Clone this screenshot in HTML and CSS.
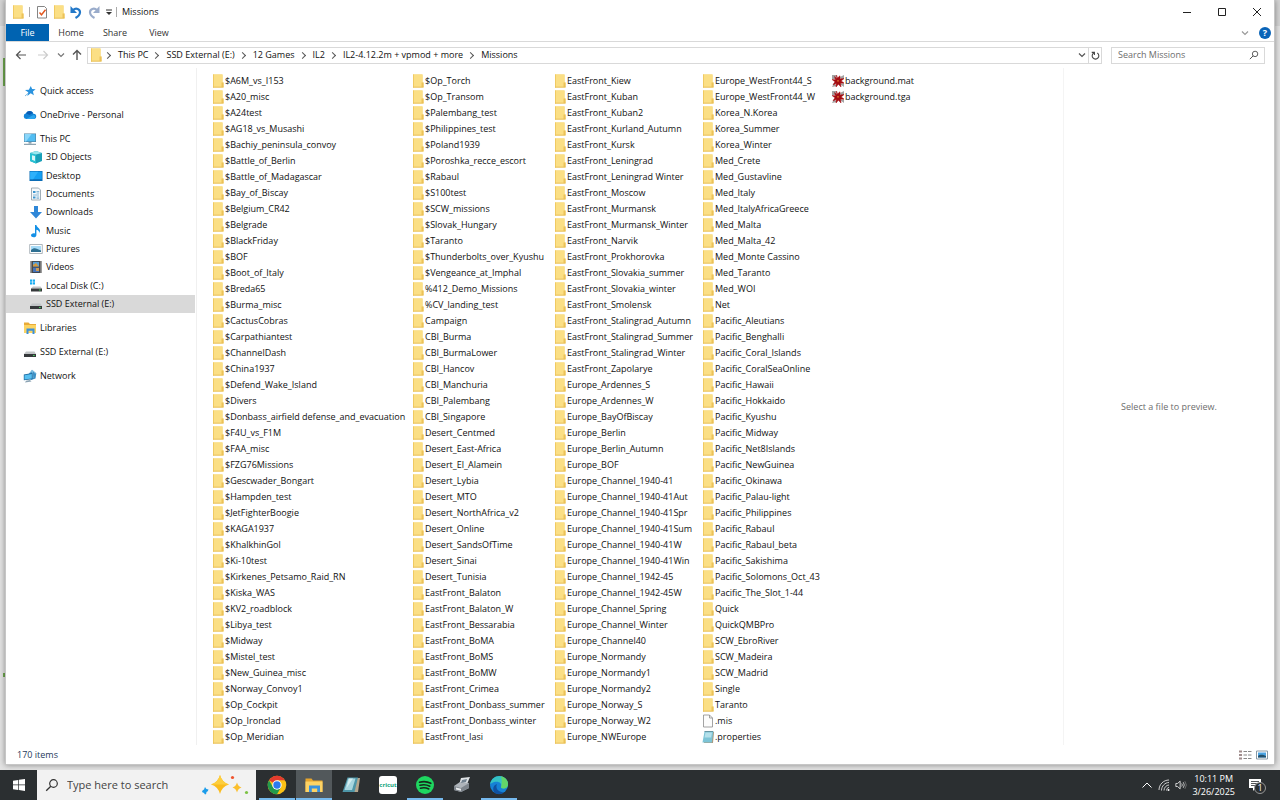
FILE: index.html
```html
<!DOCTYPE html>
<html lang="en">
<head>
    <meta charset="UTF-8">
    <meta name="viewport" content="width=device-width, initial-scale=1.0">
    <title>Missions</title>
    <link rel="stylesheet" href="styles.css">
</head>
<body>
    <!-- Icon sprite -->
    <svg class="sprite" aria-hidden="true">
        <symbol id="i-folder" viewBox="0 0 12 14">
            <path d="M1 .5h9.500v8H11.500v5H1z" fill="#f3cf66"/>
            <path d="M1 .5h9.500v12.500H1z" fill="#fbdf85"/>
            <path d="M1 .5h1v13H1z" fill="#f0ca62"/>
            <path d="M9.500 8.500h2v4.500h-2z" fill="#ecc258"/>
            <path d="M1 12.700h10.500v.8H1z" fill="#e6bd55"/>
        </symbol>
        <symbol id="i-file" viewBox="0 0 12 14">
            <path d="M1.500 1h6l3 3v9h-9z" fill="#fcfcfc" stroke="#8c8c8c" stroke-width=".8"/>
            <path d="M7.500 1v3h3" fill="none" stroke="#8c8c8c" stroke-width=".8"/>
        </symbol>
        <symbol id="i-props" viewBox="0 0 12 14">
            <path d="M3 2h9l-1 11H2z" fill="#a99a80"/>
            <path d="M2.500 1.500h8.800L9.800 12.500H.5z" fill="#7cc4d6"/>
            <path d="M3.500 2.500h6.500l-.8 5H2.500z" fill="#b4e0ea"/>
            <path d="M2.500 1.500h8.800" stroke="#5c8b99" stroke-width=".9"/>
        </symbol>
        <symbol id="i-splat" viewBox="0 0 12 12">
            <path d="M0 0h4v4H0zM8 2l4-2v4L9 5zM0 12l2-4 3 3zM8 9l4-1v4z" fill="#a3a3a3"/>
            <path d="M4.500 0l1 3L8 .8 8 4l4-.5L9.200 6l2.800 2-3.400.2L9 12 6.400 9.200 4 12l.2-3.500L1 9.800l2-3L0 4.500l3.500.3L2.500 1.500l2.200 2z" fill="#a40d12" stroke="#a40d12" stroke-width=".5"/>
            <circle cx="6" cy="5.800" r=".9" fill="#e0742e"/>
        </symbol>
        <symbol id="i-star" viewBox="0 0 14 14">
            <path d="M7.800 2l1.300 3.100 3.500.1-2.700 2.300 1 3.700-3.200-1.900L4.300 12l.9-3.700L2 6l3.900-.3z" fill="#2a93df"/>
            <path d="M2 12l3.500-3" stroke="#7ab8e0" stroke-width="1"/>
        </symbol>
        <symbol id="i-cloud" viewBox="0 0 14 14">
            <path d="M3.200 11A2.900 2.900 0 0 1 3 5.300 4 4 0 0 1 10.400 5.700a2.700 2.700 0 0 1 .9 5.300z" fill="#1283d6"/>
            <path d="M3 5.300A4 4 0 0 1 10 4.800L6.500 7z" fill="#0a5cb4"/>
            <path d="M3.200 11l7.500-4.300a2.700 2.700 0 0 1 .9 4.300z" fill="#2ba5ee"/>
        </symbol>
        <symbol id="i-pc" viewBox="0 0 14 14">
            <path d="M1 1.500h12v8.500H1z" fill="#4b7f9f"/>
            <path d="M1.600 2.100h10.800v7.300H1.600z" fill="#52bdf2"/>
            <path d="M1.600 2.100h7L3 9.400H1.600z" fill="#8bd6f9"/>
            <path d="M5.500 10h3v1.500h-3zM1 11.700h12v1.300H1z" fill="#8fa4b1"/>
        </symbol>
        <symbol id="i-cube" viewBox="0 0 14 14">
            <path d="M7 1l6 2v8l-6 2.500L1 11V3z" fill="#1aa0b8"/>
            <path d="M1 3l6 1.500v9L1 11z" fill="#27c1d3"/>
            <path d="M7 1l6 2-6 1.600L1 3z" fill="#9ae8ee"/>
            <path d="M3 5.200l3 .9V11l-3-1.200z" fill="#d9f7f8"/>
        </symbol>
        <symbol id="i-desktop" viewBox="0 0 14 14">
            <path d="M.5 2h13v10H.5z" fill="#0b6cb5"/>
            <path d="M1.200 2.700h11.600v7.500H1.200z" fill="#14a0f4"/>
            <path d="M1.200 2.700h8l-5 7.500h-3z" fill="#2eb1fb"/>
        </symbol>
        <symbol id="i-doc" viewBox="0 0 14 14">
            <path d="M2.500 1h7l2 2v10h-9z" fill="#f6f9fb" stroke="#8c9aa4" stroke-width=".8"/>
            <path d="M4 4h2.500v2H4zM4 9.500h2.500v2H4z" fill="#3b95cf"/>
            <path d="M7.500 4.500h2.700M7.500 6h2.700M4 8h6M7.500 10h2.700M7.500 11.300h2.700" stroke="#6aa6cc" stroke-width=".8"/>
        </symbol>
        <symbol id="i-down" viewBox="0 0 14 14">
            <path d="M5 1h4v6h4l-6 6.500L1 7h4z" fill="#2f87d8"/>
        </symbol>
        <symbol id="i-music" viewBox="0 0 14 14">
            <path d="M6 1h1.400c.2 2.300 3.400 3 3.600 5.500 0 1-.3 1.800-.8 2.500.2-2-1.300-3-2.800-3.300V11c0 1.400-1.200 2.300-2.700 2.300S2 12.600 2 11.300s1.700-2.500 4-1.900z" fill="#1490e6"/>
        </symbol>
        <symbol id="i-pic" viewBox="0 0 14 14">
            <path d="M.7 2.500h12.600v9H.7z" fill="#fff" stroke="#9aa5ac" stroke-width=".8"/>
            <path d="M2 4h10v6H2z" fill="#a8dcf8"/>
            <path d="M2 8c3-3 5-2 10 .5V10H2z" fill="#2e7092"/>
        </symbol>
        <symbol id="i-video" viewBox="0 0 14 14">
            <path d="M1.500 1h11v12h-11z" fill="#3b3b3b"/>
            <path d="M4 1.800h6v4.700H4z" fill="#5aa0d8"/>
            <path d="M4 7.500h6v4.700H4z" fill="#4674ba"/>
            <path d="M4 5l3-2 3 3.500H4z" fill="#d59a3d"/>
            <path d="M7 8h3v3H7z" fill="#cc9a58"/>
            <path d="M2.700 1.500v11M11.300 1.500v11" stroke="#d8d8d8" stroke-width="1" stroke-dasharray="1 1"/>
        </symbol>
        <symbol id="i-drive" viewBox="0 0 14 14">
            <path d="M3 6.500h8.500L13 9H1z" fill="#c2c5c7"/>
            <path d="M1 9h12v3H1z" fill="#36393b"/>
            <path d="M10 10h1.700v1H10z" fill="#46d15c"/>
        </symbol>
        <symbol id="i-osdrive" viewBox="0 0 14 14">
            <path d="M1 .5h2.200v2.200H1zM3.800.5H6v2.200H3.800zM1 3.300h2.200v2.200H1zM3.800 3.300H6v2.200H3.800z" fill="#16abf0"/>
            <path d="M4 7.500h7.500L13 9.500H2z" fill="#c2c5c7"/>
            <path d="M2 9.500h11v3H2z" fill="#36393b"/>
            <path d="M10 10.500h1.700v1H10z" fill="#46d15c"/>
        </symbol>
        <symbol id="i-lib" viewBox="0 0 14 14">
            <path d="M1 1.500h4.500L7 3h6v9H1z" fill="#e9ab38"/>
            <path d="M1 4h12v8H1z" fill="#fcd462"/>
            <path d="M3.500 7.500h8V13h-2V9.700h-4V13h-2z" fill="#3c90d8"/>
        </symbol>
        <symbol id="i-net" viewBox="0 0 14 14">
            <path d="M9 .8l4.300 3.500-.8 5.200L8 11 5 6z" fill="#3c8fc4"/>
            <path d="M7 3.500l3-1.700 2.500 3M9 1l1 8" stroke="#a5d8f2" stroke-width=".6" fill="none"/>
            <path d="M.8 5.500L9.500 4v6.200L.8 11.200z" fill="#1d6a9f"/>
            <path d="M1.500 6.200L8.800 5v4.500l-7.300.9z" fill="#57bff0"/>
            <path d="M3 11.700l4-.6 1.500 1.500-6.500.9z" fill="#8ba3b3"/>
        </symbol>
        <symbol id="i-search" viewBox="0 0 14 14">
            <circle cx="8.500" cy="5.500" r="3.800" fill="none" stroke="currentColor" stroke-width="1.200"/>
            <path d="M5.800 8.200L1.200 12.800" stroke="currentColor" stroke-width="1.300"/>
        </symbol>
        <symbol id="i-chevron" viewBox="0 0 8 8">
            <path d="M1 2.500l3 3 3-3" fill="none" stroke="currentColor" stroke-width="1.200"/>
        </symbol>
    </svg>

    <div class="desktop">
        <div class="window">
            <header class="titlebar">
                <svg class="icon folder"><use href="#i-folder"/></svg>
                <span class="divider"></span>
                <button class="quick" aria-label="Properties">
                    <svg class="icon" viewBox="0 0 14 14"><path d="M2.500 1.500h7l2 2v9.500h-9z" fill="#fff" stroke="#777" stroke-width=".9"/><path d="M4.500 7.500l2 2.300 4-5" fill="none" stroke="#e2571f" stroke-width="1.400"/></svg>
                </button>
                <button class="quick" aria-label="New folder"><svg class="icon folder"><use href="#i-folder"/></svg></button>
                <button class="quick" aria-label="Undo">
                    <svg class="icon" viewBox="0 0 14 14"><path d="M4 5C7 2.500 11.200 4 11 7.500c-.2 2.500-1.700 4-4.500 5.500" fill="none" stroke="#2378c8" stroke-width="2.200"/><path d="M1.500 1v7h6.500z" fill="#2378c8"/></svg>
                </button>
                <button class="quick" aria-label="Redo">
                    <svg class="icon" viewBox="0 0 14 14"><path d="M10 5C7 2.500 2.800 4 3 7.500c.2 2.500 1.700 4 4.500 5.500" fill="none" stroke="#9aaccb" stroke-width="2.200"/><path d="M12.500 1v7H6z" fill="#9aaccb"/></svg>
                </button>
                <button class="quick menu" aria-label="Customize toolbar">
                    <svg class="icon small" viewBox="0 0 8 8"><path d="M1 2h6" stroke="#333"/><path d="M1 4h6L4 7z" fill="#333"/></svg>
                </button>
                <span class="divider"></span>
                <h1>Missions</h1>
                <div class="window-buttons">
                    <button aria-label="Minimize"><svg viewBox="0 0 10 10"><path d="M1 5.500h8" stroke="#222"/></svg></button>
                    <button aria-label="Maximize"><svg viewBox="0 0 10 10"><path d="M1.500 1.500h7v7h-7z" fill="none" stroke="#222"/></svg></button>
                    <button aria-label="Close"><svg viewBox="0 0 10 10"><path d="M1 1l8 8M9 1L1 9" stroke="#222"/></svg></button>
                </div>
            </header>

            <nav class="ribbon">
                <button class="tab file">File</button>
                <button class="tab">Home</button>
                <button class="tab">Share</button>
                <button class="tab">View</button>
                <button class="expand" aria-label="Expand ribbon"><svg><use href="#i-chevron"/></svg></button>
                <button class="help" aria-label="Help">?</button>
            </nav>

            <div class="toolbar">
                <button class="arrow" aria-label="Back"><svg viewBox="0 0 12 12"><path d="M11 6H2M5.500 2L1.500 6l4 4" fill="none" stroke="#555" stroke-width="1.200"/></svg></button>
                <button class="arrow" aria-label="Forward"><svg viewBox="0 0 12 12"><path d="M1 6h9M6.500 2l4 4-4 4" fill="none" stroke="#ccc" stroke-width="1.200"/></svg></button>
                <button class="recent" aria-label="Recent"><svg><use href="#i-chevron"/></svg></button>
                <button class="up" aria-label="Up"><svg viewBox="0 0 12 12"><path d="M6 11V2M2 5.500l4-4 4 4" fill="none" stroke="#555" stroke-width="1.400"/></svg></button>
                <div class="address">
                    <svg class="icon folder"><use href="#i-folder"/></svg>
                    <ol class="crumbs">
                        <li><a href="#">This PC</a></li>
                        <li><a href="#">SSD External (E:)</a></li>
                        <li><a href="#">12 Games</a></li>
                        <li><a href="#">IL2</a></li>
                        <li><a href="#">IL2-4.12.2m + vpmod + more</a></li>
                        <li><a href="#">Missions</a></li>
                    </ol>
                    <button class="history" aria-label="Previous locations"><svg><use href="#i-chevron"/></svg></button>
                    <button class="refresh" aria-label="Refresh"><svg viewBox="0 0 10 10"><path d="M7 2.200a3.700 3.700 0 1 1-4 0M.8 1.500h3v3" fill="none" stroke="#444" stroke-width="1.200"/></svg></button>
                </div>
                <div class="search">
                    <input type="text" placeholder="Search Missions" aria-label="Search Missions">
                    <svg><use href="#i-search"/></svg>
                </div>
            </div>

            <main class="content">
                <nav class="sidebar">
                    <ul>
                        <li><a href="#"><svg class="icon"><use href="#i-star"/></svg>Quick access</a></li>
                    </ul>
                    <ul>
                        <li><a href="#"><svg class="icon"><use href="#i-cloud"/></svg>OneDrive - Personal</a></li>
                    </ul>
                    <ul class="this-pc">
                        <li><a href="#"><svg class="icon"><use href="#i-pc"/></svg>This PC</a></li>
                        <li class="child"><a href="#"><svg class="icon"><use href="#i-cube"/></svg>3D Objects</a></li>
                        <li class="child"><a href="#"><svg class="icon"><use href="#i-desktop"/></svg>Desktop</a></li>
                        <li class="child"><a href="#"><svg class="icon"><use href="#i-doc"/></svg>Documents</a></li>
                        <li class="child"><a href="#"><svg class="icon"><use href="#i-down"/></svg>Downloads</a></li>
                        <li class="child"><a href="#"><svg class="icon"><use href="#i-music"/></svg>Music</a></li>
                        <li class="child"><a href="#"><svg class="icon"><use href="#i-pic"/></svg>Pictures</a></li>
                        <li class="child"><a href="#"><svg class="icon"><use href="#i-video"/></svg>Videos</a></li>
                        <li class="child"><a href="#"><svg class="icon"><use href="#i-osdrive"/></svg>Local Disk (C:)</a></li>
                        <li class="child selected"><a href="#"><svg class="icon"><use href="#i-drive"/></svg>SSD External (E:)</a></li>
                    </ul>
                    <ul>
                        <li><a href="#"><svg class="icon"><use href="#i-lib"/></svg>Libraries</a></li>
                    </ul>
                    <ul>
                        <li><a href="#"><svg class="icon"><use href="#i-drive"/></svg>SSD External (E:)</a></li>
                    </ul>
                    <ul>
                        <li><a href="#"><svg class="icon"><use href="#i-net"/></svg>Network</a></li>
                    </ul>
                </nav>
                <ul class="files" id="files"></ul>
                <aside class="preview">Select a file to preview.</aside>
            </main>

            <footer class="statusbar">
                <span>170 items</span>
                <div class="views">
                    <button aria-label="Details"><svg viewBox="0 0 14 10"><path d="M1 1.500h3M1 5h3M1 8.500h3" stroke="#a08c8c" stroke-width="2"/><path d="M5.500 1.500h3.500M10 1.500h3.500M5.500 5h3.500M10 5h3.500M5.500 8.500h3.500M10 8.500h3.500" stroke="#888"/></svg></button>
                    <button aria-label="Large icons"><svg viewBox="0 0 14 10"><path d="M1.500 1h11v8h-11z" fill="#fff" stroke="#8a9aa5"/><path d="M3 2.500h8v5H3z" fill="#4aa3e2"/><path d="M3 6c3-2 5-1 8 0v1.500H3z" fill="#24506b"/></svg></button>
                </div>
            </footer>
        </div>
    </div>

    <footer class="taskbar">
        <button class="start" aria-label="Start"><svg viewBox="0 0 14 14"><path d="M1 2.700l5.300-.8v4.700H1zM7 1.800L13 1v5.600H7zM1 7.300h5.300V12L1 11.300zM7 7.300h6V13l-6-.9z" fill="#fff"/></svg></button>
        <div class="task-search">
            <svg class="glass"><use href="#i-search"/></svg>
            <input type="text" placeholder="Type here to search" aria-label="Type here to search">
            <svg class="sparkles" viewBox="0 0 48 22">
                <path d="M19 1q2 7.500 9 9.500-7 2-9 9.500-2-7.500-9-9.500 7-2 9-9.500z" fill="#fbbc1c"/>
                <path d="M19 1q2 7.500 9 9.500H10q7-2 9-9.500z" fill="#fdce3e"/>
                <path d="M36 8.500q1 4 4.500 5-3.500 1-4.500 5-1-4-4.500-5 3.500-1 4.500-5z" fill="#fbbf2c"/>
                <path d="M4 13q1 2.500 3.500 2.500-.5 2-2 2.500 0 2.500-1.500 2.500-.5-2-3-2.500 0-2 2-2.500z" fill="#1b9cea"/>
                <circle cx="31.500" cy="3.500" r="1.600" fill="#f0532d"/>
                <circle cx="45.500" cy="18.500" r="1.600" fill="#7cc243"/>
            </svg>
        </div>
        <div class="apps">
            <button class="running" aria-label="Chrome">
                <svg viewBox="0 0 20 20"><circle cx="10" cy="10" r="9.300" fill="#fbc116"/><path d="M10 10L2 5.300A9.300 9.300 0 0 1 18 5.300H10z" fill="#e33b2e"/><path d="M2 5.300A9.300 9.300 0 0 0 10 19.300L14 12.300 6 12.300z" fill="#229a4c"/><circle cx="10" cy="10" r="4.700" fill="#fff"/><circle cx="10" cy="10" r="3.700" fill="#2d7bee"/></svg>
            </button>
            <button class="running active" aria-label="File Explorer">
                <svg viewBox="0 0 20 20"><path d="M1.500 3.500h6l1.500 2h9.500V17h-17z" fill="#e8a52c"/><path d="M1.500 6.500h17V17h-17z" fill="#fdd365"/><path d="M5 10.500h11V17h-2.800v-3.500H7.800V17H5z" fill="#3a92dd"/></svg>
            </button>
            <button aria-label="Notepad">
                <svg viewBox="0 0 20 20"><path d="M7 3h12l-2 14H4z" fill="#b5a68d"/><path d="M6.500 2.500H17L13.500 17H1.500z" fill="#4e96a8"/><path d="M7.200 3.500h7.300L11 15H3.500z" fill="#a8d6df"/><path d="M8 3.500h4L5.500 13z" fill="#d5eff2"/></svg>
            </button>
            <button aria-label="Cricut"><span class="cricut">cricut</span></button>
            <button class="running" aria-label="Spotify">
                <svg viewBox="0 0 20 20"><circle cx="10" cy="10" r="9" fill="#1ed760"/><path d="M4.500 7.300q6-1.800 11.300 1M5 10.300q5-1.500 9.800.9M5.500 13.200q4.500-1.200 8.300.8" fill="none" stroke="#16271c" stroke-width="1.600" stroke-linecap="round"/></svg>
            </button>
            <button aria-label="Scanner">
                <svg viewBox="0 0 20 20"><path d="M9 3l9-1-3 7-8 1z" fill="#dfe3e6"/><path d="M2 11l6-4 9 1v5l-8 4-7-2z" fill="#aeb4ba"/><path d="M2 11l7 2 8-5v5l-8 4-7-2z" fill="#7e858c"/><path d="M10 5l5-1-1 3-5 1z" fill="#71818f"/><path d="M4 12.500l5 1.300v2L4 14.500z" fill="#e9ecee"/></svg>
            </button>
            <button class="running" aria-label="Edge">
                <svg viewBox="0 0 20 20"><circle cx="10" cy="10" r="9" fill="#1682d5"/><path d="M1.200 9C2 4 6 1 10.300 1 15.500 1 19 5 19 9c0 3-2 4.500-4.500 4.500-2 0-3-1-2.300-2C13.500 8 8 4.500 1.200 9z" fill="#35c3c4"/><path d="M12 1.300C16.500 2.300 19 5.500 19 9c0 3-2 4.500-4.500 4.500-2 0-3-1-2.300-2C13 8 13 4 12 1.300z" fill="#63d668"/><path d="M8 9c-2 4 1 8 7 8.500A9 9 0 0 1 5 17.500C3 13 5 10 8 9z" fill="#1051a0"/></svg>
            </button>
        </div>
        <div class="tray">
            <button aria-label="Show hidden icons"><svg viewBox="0 0 12 12"><path d="M1.500 8.500L6 4l4.500 4.500" fill="none" stroke="#fff"/></svg></button>
            <button aria-label="Wi-Fi"><svg viewBox="0 0 12 12"><path d="M1 11C1 5.500 5.500 1 11 1M3.500 11.500C3.500 7 7 3.500 11 3.500M6 11.500c0-3 2.500-5.500 5-5.500M8.500 11.500c0-1.500 1-3 2.500-3" fill="none" stroke="#ddd" stroke-width=".9"/><circle cx="10.500" cy="11" r="1" fill="#fff"/></svg></button>
            <button aria-label="Volume"><svg viewBox="0 0 14 12"><path d="M1 4.200h2L6 1.500v9L3 7.800H1z" fill="none" stroke="#fff" stroke-width=".9"/><path d="M7.800 4.200q1.500 1.800 0 3.600M9.600 2.700q2.500 3.300 0 6.600" fill="none" stroke="#fff" stroke-width=".8"/><path d="M11.500 1.500q3.500 4.500 0 9" fill="none" stroke="#888" stroke-width=".8"/></svg></button>
            <button class="clock"><time>10:11 PM</time><time>3/26/2025</time></button>
            <button class="notify" aria-label="Notifications">
                <svg viewBox="0 0 14 14"><path d="M1 1h12v9H7.500L5 13v-3H1z" fill="#fff"/><path d="M3 3.500h8M3 5.500h8M3 7.500h6" stroke="#2b2f31" stroke-width=".8"/></svg>
                <span class="badge">1</span>
            </button>
        </div>
    </footer>

    <script src="script.js"></script>
</body>
</html>
```

FILE: styles.css
```css
:root {
    --text: #111;
    --line: #d9d9d9;
    --accent: #0063b1;
    --taskbar: #2b2f31;
    --running: #76b9ed;
}

* {
    box-sizing: border-box;
    margin: 0;
    padding: 0;
}

body {
    display: flex;
    flex-direction: column;
    min-height: 100vh;
    font-family: "Open Sans", "Noto Sans", sans-serif;
    font-size: 9px;
    line-height: 16px;
    color: var(--text);
}

button,
input {
    font: inherit;
    color: inherit;
    background: none;
    border: none;
    outline: none;
}

button {
    display: flex;
    align-items: center;
    justify-content: center;
}

a {
    color: inherit;
    text-decoration: none;
}

ul,
ol {
    list-style: none;
}

.sprite {
    position: absolute;
    width: 0;
    height: 0;
}

.icon {
    width: 14px;
    height: 14px;
    flex-shrink: 0;
}

.icon.folder {
    width: 12px;
}

.icon.small {
    width: 8px;
    height: 8px;
}

.desktop {
    flex: 1;
    display: flex;
    padding: 0 5px 5px;
    background:
        linear-gradient(#6fa84f, #6fa84f) 3px 58px / 2px 28px no-repeat,
        linear-gradient(#6fa84f, #6fa84f) 3px 673px / 2px 4px no-repeat,
        linear-gradient(#d4d4d4 26px, #e3e3e3 26px);
}

.window {
    flex: 1;
    min-width: 0;
    display: flex;
    flex-direction: column;
    background: #fff;
    border: 1px solid #c6c6c6;
    border-top: none;
    box-shadow: 0 0 6px rgba(0, 0, 0, 0.4);
}

/* Title bar */
.titlebar {
    display: flex;
    align-items: center;
    gap: 4px;
    height: 24px;
    padding-left: 6px;
}

.titlebar h1 {
    font-size: 9px;
    font-weight: normal;
}

.divider {
    width: 1px;
    height: 10px;
    margin: 0 1px;
    background: #aaa;
}

.quick.menu {
    margin-right: -2px;
}

.window-buttons {
    display: flex;
    margin-left: auto;
}

.window-buttons button {
    width: 35px;
    height: 24px;
}

.window-buttons svg {
    width: 10px;
    height: 10px;
}

/* Ribbon tabs */
.ribbon {
    display: flex;
    align-items: center;
    height: 18px;
    border-bottom: 1px solid var(--line);
}

.tab {
    width: 44px;
    height: 17px;
    color: #333;
}

.tab.file {
    width: 43px;
    background: var(--accent);
    color: #fff;
}

.expand {
    margin-left: auto;
    color: #999;
}

.expand svg,
.recent svg,
.history svg {
    width: 8px;
    height: 8px;
}

.help {
    width: 12px;
    height: 12px;
    margin: 0 3px 0 10px;
    border-radius: 50%;
    background: #0a64b8;
    color: #fff;
    font-weight: bold;
}

/* Address row */
.toolbar {
    display: flex;
    align-items: center;
    height: 26px;
    padding: 0 9px;
}

.arrow {
    width: 12px;
    margin-right: 10px;
}

.recent {
    color: #777;
}

.arrow + .recent {
    margin-left: -2px;
}

.up {
    margin: 0 4px 0 6px;
}

.arrow svg,
.up svg {
    width: 12px;
    height: 12px;
}

.address,
.search {
    display: flex;
    align-items: center;
    height: 17px;
    border: 1px solid var(--line);
}

.address {
    flex: 1;
    padding-left: 2px;
}

.crumbs {
    display: flex;
    flex: 1;
    margin-left: 3px;
}

.crumbs li {
    display: flex;
    align-items: center;
}

.crumbs li::before {
    content: "";
    width: 4px;
    height: 4px;
    margin-right: 8px;
    border: solid #555;
    border-width: 1px 1px 0 0;
    transform: rotate(45deg);
}

.crumbs a {
    margin-right: 5px;
}

.history,
.refresh {
    width: 13px;
    height: 15px;
    color: #555;
}

.refresh {
    border-left: 1px solid var(--line);
}

.refresh svg {
    width: 9px;
    height: 9px;
}

.search {
    width: 154px;
    margin-left: 9px;
    padding: 0 5px 0 6px;
}

.search input {
    flex: 1;
    min-width: 0;
}

.search input::placeholder {
    color: #6d6d6d;
}

.search svg {
    width: 10px;
    height: 10px;
    color: #444;
}

/* Panes */
.content {
    flex: 1;
    display: flex;
}

.sidebar {
    display: flex;
    flex-direction: column;
    gap: 6px;
    width: 191px;
    padding: 14px 1px 0 0;
    border-right: 1px solid #f0f0f0;
}

.sidebar ul {
    display: grid;
    grid-auto-rows: 1fr;
}

.sidebar .this-pc {
    height: 183px;
}

.sidebar a {
    display: flex;
    align-items: center;
    gap: 3px;
    height: 100%;
    min-height: 18px;
    padding-left: 17px;
}

.sidebar .child a {
    padding-left: 23px;
}

.sidebar .selected {
    background: #d9d9d9;
}

.files {
    flex: 1;
    display: grid;
    grid-auto-flow: column;
    grid-template-rows: repeat(42, 16px);
    grid-template-columns: 200px 142px 148px 130px auto;
    justify-content: start;
    padding: 5px 0 0 15px;
}

.files li {
    display: flex;
    align-items: center;
    gap: 1px;
    white-space: nowrap;
}

.files .icon {
    width: 12px;
}

.preview {
    display: flex;
    align-items: center;
    justify-content: center;
    width: 211px;
    border-left: 1px solid #f4f4f4;
    color: #6d6d6d;
}

/* Status bar */
.statusbar {
    display: flex;
    align-items: center;
    justify-content: space-between;
    height: 19px;
    padding: 0 5px 0 11px;
    color: #1e395b;
}

.views {
    display: flex;
    gap: 3px;
}

.views svg {
    width: 14px;
    height: 10px;
}

/* Taskbar */
.taskbar {
    display: flex;
    height: 30px;
    background: var(--taskbar);
    color: #fff;
}

.start {
    width: 37px;
}

.start svg {
    width: 14px;
    height: 14px;
}

.task-search {
    display: flex;
    align-items: center;
    width: 219px;
    padding: 0 7px 0 8px;
    background: #f2f2f2;
    color: #333;
}

.task-search input {
    flex: 1;
    min-width: 0;
    font-size: 11px;
}

.task-search input::placeholder {
    color: #444;
}

.glass {
    width: 14px;
    height: 14px;
    margin-right: 8px;
}

.sparkles {
    width: 48px;
    height: 22px;
}

.apps {
    display: flex;
    gap: 1px;
    margin-left: 3px;
}

.apps button {
    width: 36px;
}

.apps svg {
    width: 20px;
    height: 20px;
}

.apps .running {
    border-bottom: 2px solid var(--running);
    padding-top: 2px;
}

.apps .active {
    background: #52585b;
}

.cricut {
    width: 18px;
    border-radius: 3px;
    background: #fff;
    color: #12a37a;
    font-size: 6px;
    font-weight: bold;
    line-height: 18px;
}

.tray {
    display: flex;
    align-items: center;
    gap: 5px;
    margin-left: auto;
    padding-right: 18px;
}

.tray svg {
    width: 12px;
    height: 12px;
}

.tray .clock {
    flex-direction: column;
    line-height: 13px;
}

.notify {
    position: relative;
    margin-left: 8px;
}

.notify svg {
    width: 14px;
    height: 14px;
}

.badge {
    position: absolute;
    left: 6px;
    top: 4px;
    width: 12px;
    height: 12px;
    border: 1px solid #999;
    border-radius: 50%;
    background: var(--taskbar);
    line-height: 10px;
}
```

FILE: script.js
```javascript
const folders = [
    '$A6M_vs_I153', '$A20_misc', '$A24test', '$AG18_vs_Musashi', '$Bachiy_peninsula_convoy',
    '$Battle_of_Berlin', '$Battle_of_Madagascar', '$Bay_of_Biscay', '$Belgium_CR42', '$Belgrade',
    '$BlackFriday', '$BOF', '$Boot_of_Italy', '$Breda65', '$Burma_misc', '$CactusCobras',
    '$Carpathiantest', '$ChannelDash', '$China1937', '$Defend_Wake_Island', '$Divers',
    '$Donbass_airfield defense_and_evacuation', '$F4U_vs_F1M', '$FAA_misc', '$FZG76Missions',
    '$Gescwader_Bongart', '$Hampden_test', '$JetFighterBoogie', '$KAGA1937', '$KhalkhinGol',
    '$Ki-10test', '$Kirkenes_Petsamo_Raid_RN', '$Kiska_WAS', '$KV2_roadblock', '$Libya_test',
    '$Midway', '$Mistel_test', '$New_Guinea_misc', '$Norway_Convoy1', '$Op_Cockpit',
    '$Op_Ironclad', '$Op_Meridian',
    '$Op_Torch', '$Op_Transom', '$Palembang_test', '$Philippines_test', '$Poland1939',
    '$Poroshka_recce_escort', '$Rabaul', '$S100test', '$SCW_missions', '$Slovak_Hungary',
    '$Taranto', '$Thunderbolts_over_Kyushu', '$Vengeance_at_Imphal', '%412_Demo_Missions',
    '%CV_landing_test', 'Campaign', 'CBI_Burma', 'CBI_BurmaLower', 'CBI_Hancov', 'CBI_Manchuria',
    'CBI_Palembang', 'CBI_Singapore', 'Desert_Centmed', 'Desert_East-Africa', 'Desert_El_Alamein',
    'Desert_Lybia', 'Desert_MTO', 'Desert_NorthAfrica_v2', 'Desert_Online', 'Desert_SandsOfTime',
    'Desert_Sinai', 'Desert_Tunisia', 'EastFront_Balaton', 'EastFront_Balaton_W',
    'EastFront_Bessarabia', 'EastFront_BoMA', 'EastFront_BoMS', 'EastFront_BoMW',
    'EastFront_Crimea', 'EastFront_Donbass_summer', 'EastFront_Donbass_winter', 'EastFront_Iasi',
    'EastFront_Kiew', 'EastFront_Kuban', 'EastFront_Kuban2', 'EastFront_Kurland_Autumn',
    'EastFront_Kursk', 'EastFront_Leningrad', 'EastFront_Leningrad Winter', 'EastFront_Moscow',
    'EastFront_Murmansk', 'EastFront_Murmansk_Winter', 'EastFront_Narvik', 'EastFront_Prokhorovka',
    'EastFront_Slovakia_summer', 'EastFront_Slovakia_winter', 'EastFront_Smolensk',
    'EastFront_Stalingrad_Autumn', 'EastFront_Stalingrad_Summer', 'EastFront_Stalingrad_Winter',
    'EastFront_Zapolarye', 'Europe_Ardennes_S', 'Europe_Ardennes_W', 'Europe_BayOfBiscay',
    'Europe_Berlin', 'Europe_Berlin_Autumn', 'Europe_BOF', 'Europe_Channel_1940-41',
    'Europe_Channel_1940-41Aut', 'Europe_Channel_1940-41Spr', 'Europe_Channel_1940-41Sum',
    'Europe_Channel_1940-41W', 'Europe_Channel_1940-41Win', 'Europe_Channel_1942-45',
    'Europe_Channel_1942-45W', 'Europe_Channel_Spring', 'Europe_Channel_Winter',
    'Europe_Channel40', 'Europe_Normandy', 'Europe_Normandy1', 'Europe_Normandy2',
    'Europe_Norway_S', 'Europe_Norway_W2', 'Europe_NWEurope',
    'Europe_WestFront44_S', 'Europe_WestFront44_W', 'Korea_N.Korea', 'Korea_Summer',
    'Korea_Winter', 'Med_Crete', 'Med_Gustavline', 'Med_Italy', 'Med_ItalyAfricaGreece',
    'Med_Malta', 'Med_Malta_42', 'Med_Monte Cassino', 'Med_Taranto', 'Med_WOI', 'Net',
    'Pacific_Aleutians', 'Pacific_Benghalli', 'Pacific_Coral_Islands', 'Pacific_CoralSeaOnline',
    'Pacific_Hawaii', 'Pacific_Hokkaido', 'Pacific_Kyushu', 'Pacific_Midway',
    'Pacific_Net8Islands', 'Pacific_NewGuinea', 'Pacific_Okinawa', 'Pacific_Palau-light',
    'Pacific_Philippines', 'Pacific_Rabaul', 'Pacific_Rabaul_beta', 'Pacific_Sakishima',
    'Pacific_Solomons_Oct_43', 'Pacific_The_Slot_1-44', 'Quick', 'QuickQMBPro',
    'SCW_EbroRiver', 'SCW_Madeira', 'SCW_Madrid', 'Single', 'Taranto'
];

const files = [
    { name: '.mis', icon: 'file' },
    { name: '.properties', icon: 'props' },
    { name: 'background.mat', icon: 'splat' },
    { name: 'background.tga', icon: 'splat' }
];

// Folders come first, then files
const entries = folders.map(name => ({ name: name, icon: 'folder' })).concat(files);

document.getElementById('files').innerHTML = entries.map(entry =>
    `<li><svg class="icon"><use href="#i-${entry.icon}"/></svg>${entry.name}</li>`
).join('');
```
